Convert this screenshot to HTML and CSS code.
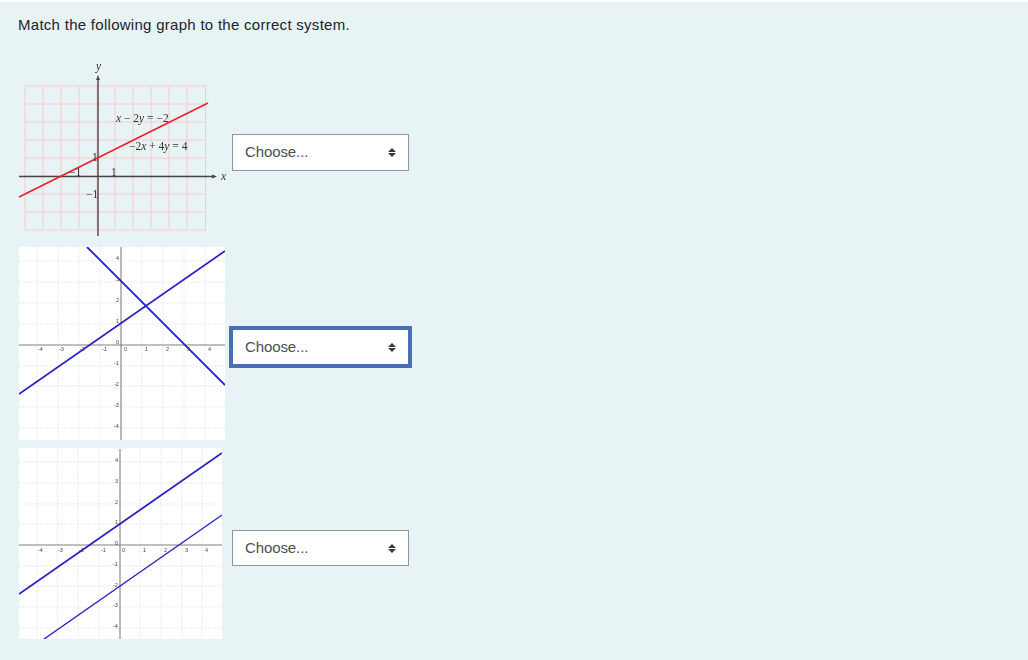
FILE: index.html
```html
<!DOCTYPE html>
<html lang="en">
<head>
<meta charset="utf-8">
<title>Match the graph</title>
<link rel="stylesheet" href="styles.css">
</head>
<body>
<main class="card">
  <p class="prompt">Match the following graph to the correct system.</p>
  <div class="rows">
    <div class="row row-a">
      <svg class="graph graph-a" viewBox="18 60 214 178" aria-label="Graph of two coinciding lines">
        <path class="pink" d="M25 86V230M43 86V230M61 86V230M79 86V230M97 86V230M115 86V230M133 86V230M151 86V230M169 86V230M187 86V230M205.500 86V230M25 86H206M25 104H206M25 122H206M25 140H206M25 158H206M25 176H206M25 194H206M25 212H206M25 230H206"/>
        <path class="axis" d="M19 176.500H214M98 78V236"/>
        <path class="head" d="M217 176.500l-5-2v4zM98 75l-2 5h4z"/>
        <path class="red" d="M19 197L208 103"/>
        <text class="serif ital" x="96" y="70">y</text>
        <text class="serif ital" x="221" y="180">x</text>
        <text class="serif" x="116" y="122"><tspan class="ital">x</tspan> − 2<tspan class="ital">y</tspan> = −2</text>
        <text class="serif" x="129" y="150">−2<tspan class="ital">x</tspan> + 4<tspan class="ital">y</tspan> = 4</text>
        <text class="serif" x="69" y="176">−1</text>
        <text class="serif" x="111" y="176">1</text>
        <text class="serif" x="92" y="161">1</text>
        <text class="serif" x="86" y="198">−1</text>
      </svg>
      <div class="choice choice-a">
        <select class="picker"><option>Choose...</option></select>
        <svg class="updown" viewBox="0 0 8 9"><path d="M4 0l4 4H0zM4 9L0 5h8z"/></svg>
      </div>
    </div>
    <div class="row row-b">
      <svg class="graph graph-b" viewBox="19 247 206 193" aria-label="Graph of two intersecting lines">
        <path class="dash" d="M37 247V440M58 247V440M79 247V440M100 247V440M142 247V440M163 247V440M184 247V440M205 247V440M19 261H225M19 282H225M19 303H225M19 324H225M19 366H225M19 386H225M19 407H225M19 428H225"/>
        <path class="gaxis" d="M19 345H225M121 247V440"/>
        <path class="blue" d="M19 394L225 251M87 247L225 385"/>
        <g class="tick">
          <text x="38" y="351">-4</text><text x="59" y="351">-3</text><text x="80" y="351">-2</text><text x="102" y="351">-1</text><text x="124" y="351">0</text><text x="145" y="351">1</text><text x="166" y="351">2</text><text x="187" y="351">3</text><text x="208" y="351">4</text>
          <text x="116" y="260">4</text><text x="116" y="281">3</text><text x="116" y="302">2</text><text x="116" y="323">1</text><text x="116" y="344">0</text><text x="114" y="365">-1</text><text x="114" y="386">-2</text><text x="114" y="407">-3</text><text x="114" y="428">-4</text>
        </g>
      </svg>
      <div class="choice choice-b">
        <select class="picker is-focused"><option>Choose...</option></select>
        <svg class="updown" viewBox="0 0 8 9"><path d="M4 0l4 4H0zM4 9L0 5h8z"/></svg>
      </div>
    </div>
    <div class="row row-c">
      <svg class="graph graph-c" viewBox="19 448 203 191" aria-label="Graph of two parallel lines">
        <path class="dash" d="M37 448V639M57.500 448V639M78 448V639M99 448V639M140 448V639M161 448V639M182 448V639M202 448V639M19 462H222M19 483H222M19 504H222M19 524H222M19 566H222M19 586H222M19 607H222M19 628H222"/>
        <path class="gaxis" d="M19 545H222M120 449V639"/>
        <path class="blue" d="M19 594L222 453"/>
        <path class="blue-thin" d="M44 639L222 515"/>
        <g class="tick">
          <text x="38" y="552">-4</text><text x="58" y="552">-3</text><text x="79" y="552">-2</text><text x="101" y="552">-1</text><text x="122" y="552">0</text><text x="143" y="552">1</text><text x="164" y="552">2</text><text x="185" y="552">3</text><text x="205" y="552">4</text>
          <text x="115" y="462">4</text><text x="115" y="483">3</text><text x="115" y="504">2</text><text x="115" y="524">1</text><text x="115" y="545">0</text><text x="113" y="566">-1</text><text x="113" y="587">-2</text><text x="113" y="607">-3</text><text x="113" y="628">-4</text>
        </g>
      </svg>
      <div class="choice choice-c">
        <select class="picker"><option>Choose...</option></select>
        <svg class="updown" viewBox="0 0 8 9"><path d="M4 0l4 4H0zM4 9L0 5h8z"/></svg>
      </div>
    </div>
  </div>
</main>
</body>
</html>
```
FILE: styles.css
```css
* { box-sizing: border-box; }
html, body { margin: 0; padding: 0; background: #fff; }
body { padding-top: 2px; font-family: "Liberation Sans", Arial, sans-serif; }
.card {
  height: 658px;
  background: #e7f3f5;
  padding: 14px 18px 0;
  overflow: hidden;
}
.prompt {
  margin: 0;
  font-size: 15px;
  line-height: 18px;
  color: #212529;
  letter-spacing: 0.28px;
}
.rows { display: flex; flex-direction: column; margin-top: 26px; }
.row { display: grid; grid-template-columns: 214px 177px; align-items: start; }
.row-b { margin-top: 9px; }
.row-c { margin-top: 8px; }
.graph { display: block; }
.graph-a { width: 214px; height: 178px; filter: blur(0.25px); }
.graph-b { width: 206px; height: 193px; margin-left: 1px; background: #fff; filter: blur(0.4px); }
.graph-c { width: 203px; height: 191px; margin-left: 1px; background: #fff; filter: blur(0.4px); }
.choice { position: relative; height: 36px; }
.choice-a { margin-top: 74px; height: 37px; }
.choice-b { margin-top: 82px; }
.choice-c { margin-top: 82px; }
.picker {
  display: block;
  width: 100%;
  height: 100%;
  padding: 0 12px;
  appearance: none;
  -webkit-appearance: none;
  background: #fff;
  border: 1px solid #8f959e;
  border-radius: 0;
  color: #495057;
  font: 15px/1.5 "Liberation Sans", Arial, sans-serif;
  letter-spacing: -0.1px;
}
.is-focused { border-color: #4a6fb5; box-shadow: 0 0 0 3px #4a6fb5; }
.updown {
  position: absolute;
  top: 14px;
  right: 13px;
  width: 8px;
  height: 9px;
  fill: #343a40;
  pointer-events: none;
}
.pink { stroke: #fbcaca; stroke-width: 1; fill: none; }
.axis { stroke: #4a4544; stroke-width: 1.4; fill: none; }
.head { fill: #4a4544; }
.red { stroke: #ee1c25; stroke-width: 1.4; fill: none; }
.serif { font: 11.500px "Liberation Serif", "Times New Roman", serif; fill: #333; }
.ital { font-style: italic; }
.dash { stroke: #ebebeb; stroke-width: 1; stroke-dasharray: 2 1; fill: none; }
.gaxis { stroke: #808080; stroke-width: 1.1; fill: none; }
.blue { stroke: #2622c4; stroke-width: 1.8; fill: none; }
.blue-thin { stroke: #2622c4; stroke-width: 1.4; fill: none; }
.tick { font: 5.500px "Liberation Sans", Arial, sans-serif; fill: #444; }
```
